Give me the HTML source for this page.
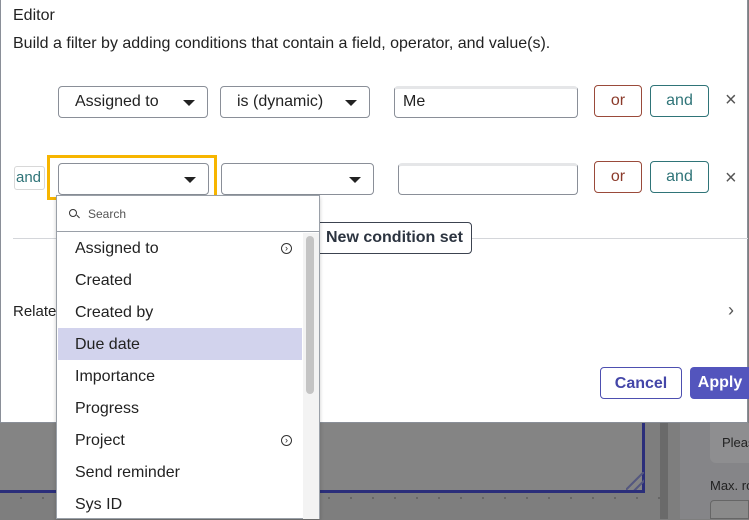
<!DOCTYPE html>
<html><head><style>
*{box-sizing:border-box;margin:0;padding:0}
body{width:749px;height:519px;overflow:hidden;position:relative;font-family:"Liberation Sans",sans-serif;background:#7e7e7e;color:#222}
.a{position:absolute}
.modal{left:0;top:0;width:748px;height:423px;background:#fff;border:1px solid #8a8f98;border-top:none}
.sel{position:absolute;height:32px;border:1px solid #8a8f98;border-radius:4px;background:#fff;font-size:16px;padding:6px 0 0 16px}
.sel:after{content:"";position:absolute;right:12px;top:13px;border-left:6px solid transparent;border-right:6px solid transparent;border-top:6px solid #222}
.inp{position:absolute;height:32px;border:1px solid #8a8f98;border-top:3px solid #e5e6e8;border-radius:4px;font-size:16px;padding:4px 0 0 8px}
.btn{position:absolute;height:32px;border-radius:4px;font-size:16px;text-align:center;padding-top:6px;background:#fff}
.or{border:1px solid #9a4a3a;color:#8b3a2a;width:48px}
.and{border:1px solid #2f7478;color:#2f7478;width:59px}
.x{position:absolute;font-size:20px;color:#555;font-weight:300}
.dd{left:56px;top:195px;width:264px;height:324px;background:#fff;border:1px solid #9aa0a8;box-shadow:0 2px 4px rgba(0,0,0,.2)}
.it{position:absolute;left:1px;width:244px;height:32px;font-size:16px;padding:8px 0 0 17px}
.ci{position:absolute;right:10px;top:11px;width:11px;height:11px;border:1px solid #333;border-radius:50%;font-size:9px;line-height:8px;text-align:center}
</style></head><body>
<div class="a" style="left:0;top:423px;width:645px;height:70px;border-right:3px solid #2b2e7a;border-bottom:3px solid #2b2e7a;background:#848484"></div>
<div class="a" style="left:626px;top:472px;width:18px;height:18px;background:linear-gradient(135deg,transparent 45%,#55587f 45%,#55587f 53%,transparent 53%,transparent 70%,#55587f 70%,#55587f 78%,transparent 78%)"></div>
<div class="a" style="left:0;top:497px;width:660px;height:2px;background:repeating-linear-gradient(90deg,transparent 0 20px,#666 20px 22px)"></div>
<div class="a" style="left:660px;top:423px;width:8px;height:96px;background:#6a6a6a"></div>
<div class="a" style="left:680px;top:423px;width:69px;height:96px;background:#858588"></div>
<div class="a" style="left:710px;top:423px;width:39px;height:40px;background:#8e8e90;border-radius:0 0 0 6px;font-size:13px;padding:12px 0 0 12px;white-space:nowrap;overflow:hidden">Pleas</div>
<div class="a" style="left:710px;top:478px;font-size:13px;white-space:nowrap">Max. ro</div>
<div class="a" style="left:710px;top:500px;width:39px;height:19px;border:1px solid #666;border-radius:4px 0 0 0;background:#8a8a8a"></div>

<div class="a modal">
<div class="a" style="left:12px;top:7px;font-size:16px">Editor</div>
<div class="a" style="left:12px;top:35px;font-size:16px">Build a filter by adding conditions that contain a field, operator, and value(s).</div>
<div class="sel" style="left:57px;top:86px;width:150px">Assigned to</div>
<div class="sel" style="left:219px;top:86px;width:150px">is (dynamic)</div>
<div class="inp" style="left:393px;top:86px;width:184px">Me</div>
<div class="btn or" style="left:593px;top:85px">or</div>
<div class="btn and" style="left:649px;top:85px">and</div>
<div class="x" style="left:724px;top:89px">×</div>

<div class="a" style="left:13px;top:166px;width:31px;height:24px;border:1px solid #d8d8d8;border-radius:3px;color:#2f7478;font-size:15px;padding:2px 0 0 1px">and</div>
<div class="a" style="left:46px;top:155px;width:170px;height:45px;border:3px solid #f7b500"></div>
<div class="sel" style="left:57px;top:163px;width:151px"></div>
<div class="sel" style="left:220px;top:163px;width:153px"></div>
<div class="inp" style="left:397px;top:163px;width:180px"></div>
<div class="btn or" style="left:593px;top:161px">or</div>
<div class="btn and" style="left:649px;top:161px">and</div>
<div class="x" style="left:724px;top:167px">×</div>

<div class="a" style="left:12px;top:238px;width:735px;height:1px;background:#d4d6da"></div>
<div class="a" style="left:310px;top:222px;width:161px;height:32px;border:1px solid #3c4350;border-radius:4px;background:#fff;font-size:16px;font-weight:bold;color:#2c3440;padding:6px 0 0 14px">New condition set</div>
<div class="a" style="left:12px;top:303px;font-size:15px">Related</div>
<div class="a" style="left:727px;top:300px;font-size:18px;color:#555">›</div>
<div class="btn" style="left:599px;top:367px;width:82px;border:1px solid #4d4fb0;color:#4446a8;font-weight:bold;padding-top:7px">Cancel</div>
<div class="btn" style="left:689px;top:367px;width:60px;background:#5355bd;color:#fff;font-weight:bold;border-radius:4px 0 0 4px;padding-top:7px">Apply</div>
</div>

<div class="a dd">
<div class="a" style="left:0;top:0;width:262px;height:36px;border-bottom:1px solid #9aa0a8;font-size:12px;color:#555;padding:11px 0 0 31px">Search</div>
<div class="a" style="left:12px;top:13px;width:8px;height:8px;border:1.3px solid #333;border-radius:50%"></div>
<div class="a" style="left:19px;top:20px;width:4px;height:1.4px;background:#333;transform:rotate(45deg)"></div>
<div class="it" style="top:36px">Assigned to<span class="ci">›</span></div>
<div class="it" style="top:68px">Created</div>
<div class="it" style="top:100px">Created by</div>
<div class="it" style="top:132px;background:#d2d3ed">Due date</div>
<div class="it" style="top:164px">Importance</div>
<div class="it" style="top:196px">Progress</div>
<div class="it" style="top:228px">Project<span class="ci">›</span></div>
<div class="it" style="top:260px">Send reminder</div>
<div class="it" style="top:292px">Sys ID</div>
<div class="a" style="left:246px;top:37px;width:16px;height:286px;background:#f3f3f3"></div>
<div class="a" style="left:249px;top:40px;width:8px;height:158px;background:#c4c4c4;border-radius:4px"></div>
</div>
</body></html>
